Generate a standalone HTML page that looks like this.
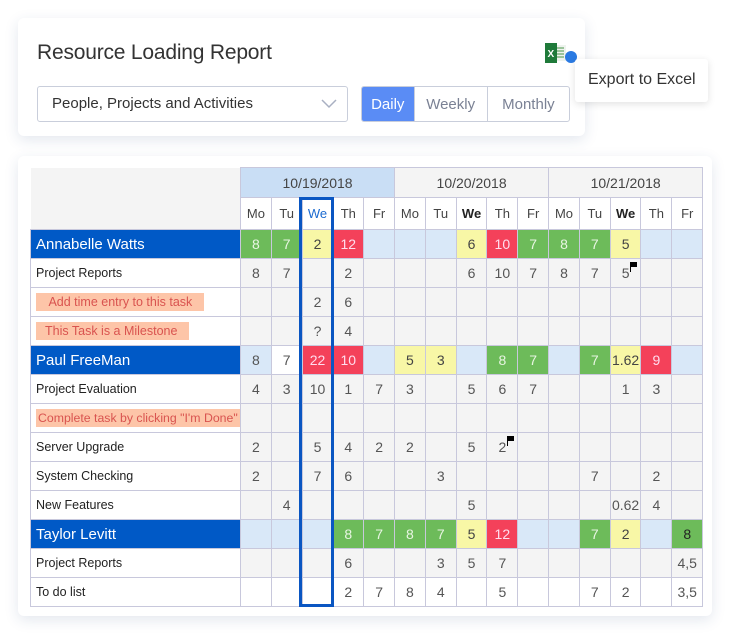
<!DOCTYPE html>
<html><head><meta charset="utf-8"><style>
*{box-sizing:border-box;margin:0;padding:0}
body{width:730px;height:644px;background:#fff;font-family:"Liberation Sans",sans-serif;position:relative;overflow:hidden}
.card{position:absolute;background:#fff;border-radius:6px;box-shadow:0 4px 14px rgba(40,70,120,.13)}
.title{position:absolute;left:37px;top:41px;font-size:21px;color:#333;letter-spacing:-.2px}
.dd{position:absolute;left:37px;top:86px;width:311px;height:36px;border:1px solid #c9cedb;border-radius:3px;font-size:15px;color:#333;padding:8px 14px}
.dd svg{position:absolute;right:10px;top:12px}
.seg{position:absolute;left:361px;top:86px;width:209px;height:36px;border:1px solid #c9cedb;border-radius:3px;display:flex;font-size:15px;color:#7a8194;overflow:hidden}
.seg div{display:flex;align-items:center;justify-content:center;border-left:1px solid #c9cedb}
.tip{position:absolute;left:575px;top:59px;width:133px;height:43px;background:#fff;box-shadow:0 2px 8px rgba(0,0,0,.12);border-radius:3px;font-size:16px;color:#333;padding:12px 0 0 13px}
table{position:absolute;left:30px;top:167px;width:672px;border-collapse:collapse;table-layout:fixed}
td{border:1px solid #c8c8dc;height:29px;text-align:center;font-size:14px;color:#555;background:#f4f4f4;padding:0;white-space:nowrap;overflow:hidden}
td.l{text-align:left;background:#fff;color:#222;font-size:12.5px;padding-left:5px;overflow:visible}
td.n{background:#0059c6;color:#fff;font-size:15px;text-align:left;padding-left:5px}
.g{background:#6dbb5a!important;color:#e8f5e2}.y{background:#f8f7a6!important;color:#444}.r{background:#f4415a!important;color:#fde}.b{background:#d9e8f8!important}.w{background:#fff!important}
.tk{display:inline-block;background:#fdc5a8;color:#d9534f;font-size:12.5px;padding:2px 8px 2px 9px}
tr.d td{background:#fff;height:32px;font-size:13px;color:#444}
tr.h td{height:30px;font-size:14px;color:#444}
.fl{position:relative}
.fl:after{content:"";position:absolute;width:7px;height:5px;background:#000;right:-8px;top:-3px}
.fl:before{content:"";position:absolute;width:1px;height:10px;background:#000;right:-2px;top:-3px}
.sel{position:absolute;left:299px;top:197px;width:35px;height:410px;border:3px solid #0a56c2}
</style></head><body>
<div class="card" style="left:18px;top:18px;width:567px;height:118px"></div>
<div class="title">Resource Loading Report</div>
<div class="dd">People, Projects and Activities<svg width="16" height="10" viewBox="0 0 16 10"><path d="M1 1l7 7 7-7" fill="none" stroke="#a9b0c2" stroke-width="1.5"/></svg></div>
<div class="seg"><div style="width:52px;background:#5a8cf5;color:#fff;border:none">Daily</div><div style="width:74px">Weekly</div><div style="width:83px">Monthly</div></div>
<svg style="position:absolute;left:545px;top:42px" width="34" height="24"><rect x="8" y="3" width="13" height="16" fill="#eef3ee"/><path d="M12 6h7M12 9h7M12 12h7M12 15h7" stroke="#6aa86a" stroke-width="1.2"/><rect x="0" y="1" width="12" height="20" fill="#1f7a3a"/><text x="2.5" y="15" font-size="10" fill="#fff" font-family="Liberation Sans" font-weight="bold">X</text><circle cx="26" cy="15" r="6" fill="#2a7ae2"/></svg>
<div class="tip">Export to Excel</div>
<div class="card" style="left:18px;top:156px;width:694px;height:460px"></div>
<table>
<colgroup><col style="width:210px"><col span="15" style="width:30.8px"></colgroup>
<tr class="h"><td rowspan="2" style="border-right:1px solid #c8c8dc;border-left:none;border-top:none"></td><td colspan="5" style="background:#c9def5">10/19/2018</td><td colspan="5">10/20/2018</td><td colspan="5">10/21/2018</td></tr>
<tr class="d"><td>Mo</td><td>Tu</td><td style="color:#1b6ad0">We</td><td>Th</td><td>Fr</td><td>Mo</td><td>Tu</td><td style="font-weight:bold;color:#222">We</td><td>Th</td><td>Fr</td><td>Mo</td><td>Tu</td><td style="font-weight:bold;color:#222">We</td><td>Th</td><td>Fr</td></tr>
<tr><td class="n">Annabelle Watts</td><td class="g">8</td><td class="g">7</td><td class="y">2</td><td class="r">12</td><td class="b"></td><td class="b"></td><td class="b"></td><td class="y">6</td><td class="r">10</td><td class="g">7</td><td class="g">8</td><td class="g">7</td><td class="y">5</td><td class="b"></td><td class="b"></td></tr>
<tr><td class="l">Project Reports</td><td>8</td><td>7</td><td></td><td>2</td><td></td><td></td><td></td><td>6</td><td>10</td><td>7</td><td>8</td><td>7</td><td style="overflow:visible"><span class="fl">5</span></td><td></td><td></td></tr>
<tr><td class="l"><span class="tk">&nbsp;Add time entry to this task&nbsp;</span></td><td></td><td></td><td>2</td><td>6</td><td></td><td></td><td></td><td></td><td></td><td></td><td></td><td></td><td></td><td></td><td></td></tr>
<tr><td class="l"><span class="tk">This Task is a Milestone&nbsp;</span></td><td></td><td></td><td>?</td><td>4</td><td></td><td></td><td></td><td></td><td></td><td></td><td></td><td></td><td></td><td></td><td></td></tr>
<tr><td class="n">Paul FreeMan</td><td class="b">8</td><td class="w">7</td><td class="r">22</td><td class="r">10</td><td class="b"></td><td class="y">5</td><td class="y">3</td><td class="b"></td><td class="g">8</td><td class="g">7</td><td class="b"></td><td class="g">7</td><td class="y">1.62</td><td class="r">9</td><td class="b"></td></tr>
<tr><td class="l">Project Evaluation</td><td>4</td><td>3</td><td>10</td><td>1</td><td>7</td><td>3</td><td></td><td>5</td><td>6</td><td>7</td><td></td><td></td><td>1</td><td>3</td><td></td></tr>
<tr><td class="l" style="padding-left:5px"><span class="tk" style="padding:2px 2px;font-size:12.3px">Complete task by clicking "I'm Done"</span></td><td></td><td></td><td></td><td></td><td></td><td></td><td></td><td></td><td></td><td></td><td></td><td></td><td></td><td></td><td></td></tr>
<tr><td class="l">Server Upgrade</td><td>2</td><td></td><td>5</td><td>4</td><td>2</td><td>2</td><td></td><td>5</td><td style="overflow:visible"><span class="fl">2</span></td><td></td><td></td><td></td><td></td><td></td><td></td></tr>
<tr><td class="l">System Checking</td><td>2</td><td></td><td>7</td><td>6</td><td></td><td></td><td>3</td><td></td><td></td><td></td><td></td><td>7</td><td></td><td>2</td><td></td></tr>
<tr><td class="l">New Features</td><td></td><td>4</td><td></td><td></td><td></td><td></td><td></td><td>5</td><td></td><td></td><td></td><td></td><td>0.62</td><td>4</td><td></td></tr>
<tr><td class="n">Taylor Levitt</td><td class="b"></td><td class="b"></td><td class="b"></td><td class="g">8</td><td class="g">7</td><td class="g">8</td><td class="g">7</td><td class="y">5</td><td class="r">12</td><td class="b"></td><td class="b"></td><td class="g">7</td><td class="y">2</td><td class="b"></td><td class="g" style="color:#222">8</td></tr>
<tr><td class="l">Project Reports</td><td></td><td></td><td></td><td>6</td><td></td><td></td><td>3</td><td>5</td><td>7</td><td></td><td></td><td></td><td></td><td></td><td>4,5</td></tr>
<tr><td class="l">To do list</td><td class="w"></td><td class="w"></td><td class="w"></td><td class="w">2</td><td class="w">7</td><td class="w">8</td><td class="w">4</td><td class="w"></td><td class="w">5</td><td class="w"></td><td class="w"></td><td class="w">7</td><td class="w">2</td><td class="w"></td><td class="w">3,5</td></tr>
</table>
<div class="sel"></div>
</body></html>
